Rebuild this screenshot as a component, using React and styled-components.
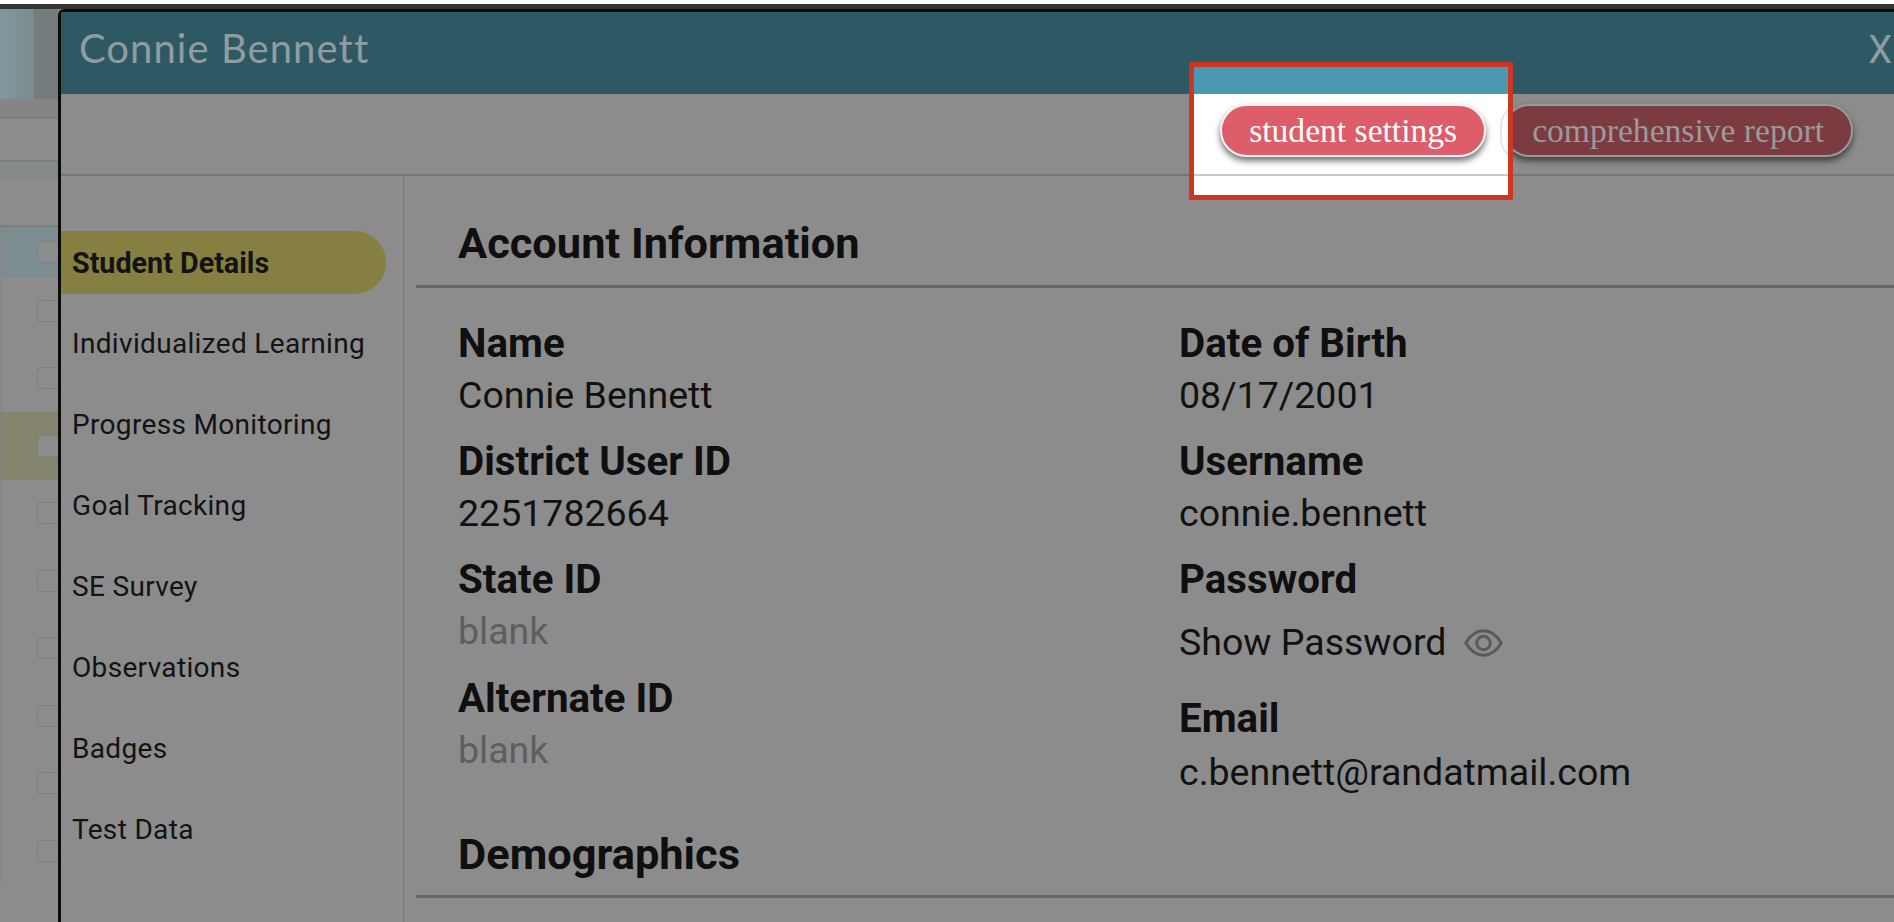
import React from "react";
import styled, { createGlobalStyle } from "styled-components";

const GlobalStyle = createGlobalStyle`
  html, body {
    margin: 0;
    padding: 0;
    background: #8c8c8c;
    overflow: hidden;
  }
  * {
    box-sizing: border-box;
  }
`;

const Page = styled.div`
  width: 1894px;
  height: 922px;
  overflow: hidden;
  display: flex;
  flex-direction: column;
  font-family: Roboto, "Liberation Sans", sans-serif;
  color: #0f0f0f;
`;

const BrowserEdge = styled.div`
  flex: none;
  height: 9px;
  background: #333;
  border-top: 4px solid #fff;
`;

const Main = styled.div`
  flex: 1;
  display: flex;
  min-height: 0;
`;

/* the table behind the dialog, only a sliver of it shows */
const Backdrop = styled.div`
  flex: none;
  width: 58px;
  overflow: hidden;
`;

const BackdropHead = styled.div`
  height: 90px;
  display: flex;
`;

const HeadCell = styled.div`
  width: ${(p) => p.$width}px;
  background: ${(p) => p.$bg};
`;

const Band = styled.div`
  height: ${(p) => p.$height}px;
  background: ${(p) => p.$bg || "#8c8c8c"};
  border-bottom: ${(p) => (p.$line ? "2px solid #7d7d7d" : "none")};
`;

const TableRow = styled.div`
  height: ${(p) => p.$height || 67.5}px;
  display: flex;
  align-items: center;
  background: ${(p) => p.$bg || "#8c8c8c"};
  border-left: 1px solid #858585;
`;

const RowCheck = styled.span`
  flex: none;
  width: 30px;
  height: 22px;
  margin-left: 36px;
  background: #8c8c8c;
  border: 1.5px solid #7e7e7e;
  border-radius: 4px;
`;

const Modal = styled.div`
  position: relative;
  flex: 1;
  min-width: 0;
  height: 920px;
  display: flex;
  flex-direction: column;
  background: #8c8c8c;
  border-left: 3.5px solid #0b0b0b;
  border-top: 3px solid #0b0b0b;
  border-top-left-radius: 6px;
`;

const ModalHeader = styled.header`
  flex: none;
  height: 82px;
  display: flex;
  align-items: center;
  justify-content: space-between;
  padding: 0 2px 11px 18px;
  background: #2f5865;
  color: #8f9ca0;
`;

const ModalTitle = styled.h1`
  margin: 0;
  font-family: Lato, sans-serif;
  font-size: 40px;
  font-weight: 400;
  letter-spacing: 1.05px;
`;

const CloseMark = styled.span`
  margin-top: 4px;
  font-size: 38px;
  font-weight: 400;
`;

const Toolbar = styled.div`
  flex: none;
  height: 82px;
  display: flex;
  justify-content: flex-end;
  gap: 17px;
  padding: 10px 41px 0 0;
  border-bottom: 2px solid #767676;
`;

const PillButton = styled.button`
  position: relative;
  z-index: ${(p) => (p.$lit ? 2 : 0)};
  height: 53px;
  padding: 0 27px;
  font-family: "Liberation Serif", serif;
  font-size: 33.6px;
  line-height: 1;
  color: ${(p) => (p.$lit ? "#fff" : "#9b9b9b")};
  background: ${(p) => (p.$lit ? "#dd5d6b" : "#7c3a41")};
  border: 2px solid ${(p) => (p.$lit ? "#f4f4f4" : "#9a9a9a")};
  border-radius: 27px;
  box-shadow: 0 4px 6px rgba(0, 0, 0, 0.55);
`;

/* red call-out that shows this part of the page undimmed */
const Spotlight = styled.div`
  position: absolute;
  z-index: 1;
  top: 50px;
  left: 1127.5px;
  width: 324px;
  height: 138px;
  display: flex;
  flex-direction: column;
  background: #fff;
  border: 5px solid #cc3722;
  border-radius: 2px;
  overflow: hidden;
`;

const SpotHeader = styled.div`
  flex: none;
  height: 27px;
  background: #4a98b2;
`;

const SpotBar = styled.div`
  position: relative;
  flex: none;
  height: 82px;
  border-bottom: 2px solid #c9c9c9;

  /* left end of the next button, which pokes into the call-out */
  &::after {
    content: "";
    position: absolute;
    top: 10px;
    right: -36px;
    width: 40px;
    height: 53px;
    border: 2px solid #e6e6e6;
    border-radius: 27px;
  }
`;

const Body = styled.div`
  flex: 1;
  min-height: 0;
  display: flex;
`;

const Sidebar = styled.nav`
  flex: none;
  width: 343px;
  padding-top: 55px;
  border-right: 1.5px solid #777;
  display: flex;
  flex-direction: column;
  gap: 18px;
`;

const NavItem = styled.a`
  flex: none;
  width: 325px;
  height: 63px;
  display: flex;
  align-items: center;
  padding-left: 11px;
  font-size: ${(p) => (p.$active ? 28.7 : 28)}px;
  font-weight: ${(p) => (p.$active ? 700 : 400)};
  letter-spacing: ${(p) => (p.$active ? "0" : "0.33px")};
  color: #131313;
  background: ${(p) => (p.$active ? "#867f42" : "transparent")};
  border-radius: 0 32px 32px 0;
`;

const Content = styled.main`
  flex: 1;
  min-width: 0;
  padding: 38px 0 0 12px;
`;

const SectionTitle = styled.h2`
  margin: 0;
  padding: 0 0 10.7px 42px;
  font-size: 43.4px;
  line-height: 60px;
  font-weight: 700;
  color: #0f0f0f;
  border-bottom: 3px solid #666;
`;

const FieldGrid = styled.div`
  display: grid;
  grid-template-columns: 721px 1fr;
  padding: 29px 0 12px 42px;
`;

const FieldColumn = styled.div`
  display: flex;
  flex-direction: column;
`;

const Field = styled.div`
  margin-bottom: 14.3px;
`;

const FieldLabel = styled.div`
  font-size: 40.3px;
  line-height: 53px;
  font-weight: 700;
`;

const FieldValue = styled.div`
  font-size: 37.5px;
  line-height: 51px;
  color: ${(p) => (p.$blank ? "#5e5e5e" : "#111")};
`;

const PasswordToggle = styled.div`
  display: flex;
  align-items: center;
  gap: 18px;
  margin: 11px 0 24px;
  font-size: 37.5px;
  line-height: 51px;
  color: #111;
`;

const EmailField = styled(Field)`
  ${FieldValue} {
    margin-top: 2px;
  }
`;

const EyeIcon = () => (
  <svg width="39" height="28" viewBox="0 0 39 28" fill="none" stroke="#5a5a5a" strokeWidth="3">
    <path d="M1.8 14 C7 5 13 1.8 19.5 1.8 C26 1.8 32 5 37.2 14 C32 23 26 26.2 19.5 26.2 C13 26.2 7 23 1.8 14 Z" />
    <circle cx="19.5" cy="14" r="6.8" />
  </svg>
);

const tableRows = [
  { key: "a" },
  { key: "b" },
  { key: "c", bg: "#85856e" },
  { key: "d" },
  { key: "e" },
  { key: "f" },
  { key: "g" },
  { key: "h" },
  { key: "i" },
];

const navItems = [
  "Student Details",
  "Individualized Learning",
  "Progress Monitoring",
  "Goal Tracking",
  "SE Survey",
  "Observations",
  "Badges",
  "Test Data",
];

const App = () => {
  return (
    <>
      <GlobalStyle />
      <Page>
        <BrowserEdge />
        <Main>
          <Backdrop>
            <BackdropHead>
              <HeadCell $width={34} $bg="linear-gradient(90deg, #82989c, #7a8c90)" />
              <HeadCell $width={24} $bg="#767b7d" />
            </BackdropHead>
            <Band $height={20} $bg="#858585" $line />
            <Band $height={43} $line />
            <Band $height={19} $bg="#858a8a" />
            <Band $height={46} $line />
            <TableRow $height={50} $bg="#7b8d91">
              <RowCheck />
            </TableRow>
            {tableRows.map((row) => (
              <TableRow key={row.key} $bg={row.bg}>
                <RowCheck />
              </TableRow>
            ))}
          </Backdrop>
          <Modal>
            <ModalHeader>
              <ModalTitle>Connie Bennett</ModalTitle>
              <CloseMark>X</CloseMark>
            </ModalHeader>
            <Toolbar>
              <PillButton $lit>student settings</PillButton>
              <PillButton>comprehensive report</PillButton>
            </Toolbar>
            <Spotlight>
              <SpotHeader />
              <SpotBar />
            </Spotlight>
            <Body>
              <Sidebar>
                {navItems.map((item, index) => (
                  <NavItem key={item} $active={index === 0}>
                    {item}
                  </NavItem>
                ))}
              </Sidebar>
              <Content>
                <SectionTitle>Account Information</SectionTitle>
                <FieldGrid>
                  <FieldColumn>
                    <Field>
                      <FieldLabel>Name</FieldLabel>
                      <FieldValue>Connie Bennett</FieldValue>
                    </Field>
                    <Field>
                      <FieldLabel>District User ID</FieldLabel>
                      <FieldValue>2251782664</FieldValue>
                    </Field>
                    <Field>
                      <FieldLabel>State ID</FieldLabel>
                      <FieldValue $blank>blank</FieldValue>
                    </Field>
                    <Field>
                      <FieldLabel>Alternate ID</FieldLabel>
                      <FieldValue $blank>blank</FieldValue>
                    </Field>
                  </FieldColumn>
                  <FieldColumn>
                    <Field>
                      <FieldLabel>Date of Birth</FieldLabel>
                      <FieldValue>08/17/2001</FieldValue>
                    </Field>
                    <Field>
                      <FieldLabel>Username</FieldLabel>
                      <FieldValue>connie.bennett</FieldValue>
                    </Field>
                    <div>
                      <FieldLabel>Password</FieldLabel>
                      <PasswordToggle>
                        Show Password
                        <EyeIcon />
                      </PasswordToggle>
                    </div>
                    <EmailField>
                      <FieldLabel>Email</FieldLabel>
                      <FieldValue>c.bennett@randatmail.com</FieldValue>
                    </EmailField>
                  </FieldColumn>
                </FieldGrid>
                <SectionTitle>Demographics</SectionTitle>
              </Content>
            </Body>
          </Modal>
        </Main>
      </Page>
    </>
  );
};

export default App;
